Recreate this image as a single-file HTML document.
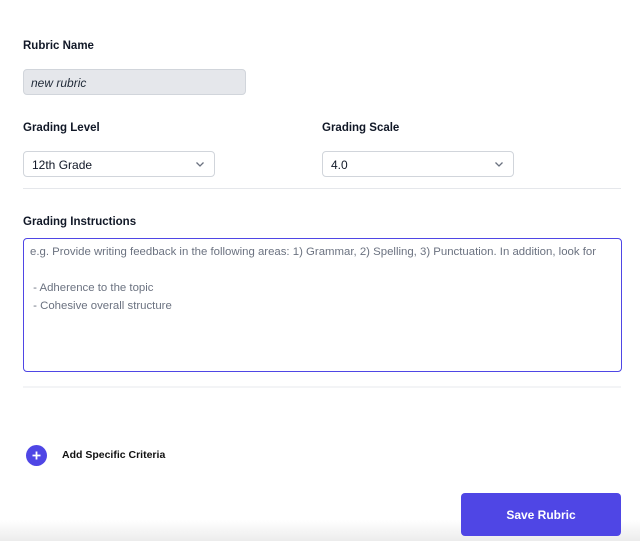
<!DOCTYPE html>
<html><head><style>
body{margin:0;width:640px;height:541px;background:#fff;font-family:"Liberation Sans",sans-serif;position:relative;overflow:hidden;color:#111827}
.a{position:absolute}
.lbl{font-size:11.5px;font-weight:bold;color:#111827}
.sel{border:1px solid #d1d5db;border-radius:4px;background:#fff;font-size:12px;box-sizing:border-box;padding:6px 8px;height:26px}
.chev{position:absolute;right:9px;top:7px}
</style></head><body>
<div class="a lbl" style="left:23px;top:40px">Rubric Name</div>
<div class="a" style="left:23px;top:69px;width:223px;height:26px;box-sizing:border-box;background:#e5e7eb;border:1px solid #d1d5db;border-radius:4px;font-size:12px;font-style:italic;padding:6px 7px;color:#1f2937">new rubric</div>
<div class="a lbl" style="left:23px;top:122px">Grading Level</div>
<div class="a sel" style="left:23px;top:151px;width:192px">12th Grade<svg class="chev" width="10" height="10" viewBox="0 0 10 10"><path d="M1.5 3.5L5 7L8.5 3.5" stroke="#6b7280" stroke-width="1.3" fill="none"/></svg></div>
<div class="a lbl" style="left:322px;top:122px">Grading Scale</div>
<div class="a sel" style="left:322px;top:151px;width:192px">4.0<svg class="chev" width="10" height="10" viewBox="0 0 10 10"><path d="M1.5 3.5L5 7L8.5 3.5" stroke="#6b7280" stroke-width="1.3" fill="none"/></svg></div>
<div class="a" style="left:23px;top:188px;width:598px;height:1px;background:#e5e7eb"></div>
<div class="a lbl" style="left:23px;top:216px">Grading Instructions</div>
<div class="a" style="left:23px;top:238px;width:599px;height:134px;box-sizing:border-box;border:1.5px solid #4f46e5;border-radius:4px;font-size:11.4px;color:#6b7280;padding:4px 6px;line-height:18px;white-space:pre">e.g. Provide writing feedback in the following areas: 1) Grammar, 2) Spelling, 3) Punctuation. In addition, look for

 - Adherence to the topic
 - Cohesive overall structure</div>
<div class="a" style="left:23px;top:386px;width:598px;height:2px;background:#f3f4f6"></div>
<svg class="a" style="left:26px;top:445px" width="21" height="21" viewBox="0 0 21 21"><circle cx="10.5" cy="10.5" r="10.5" fill="#4f46e5"/><path d="M10.5 6.5v8M6.5 10.5h8" stroke="#fff" stroke-width="1.8"/></svg>
<div class="a" style="left:62px;top:449px;font-size:10.5px;font-weight:bold;color:#111">Add Specific Criteria</div>
<div class="a" style="left:0;top:520px;width:640px;height:21px;background:linear-gradient(#fff,#ececec)"></div>
<div class="a" style="left:461px;top:493px;width:160px;height:43px;background:#4f46e5;border-radius:4px;color:#fff;font-size:12px;font-weight:bold;text-align:center;line-height:44px">Save Rubric</div>
</body></html>
